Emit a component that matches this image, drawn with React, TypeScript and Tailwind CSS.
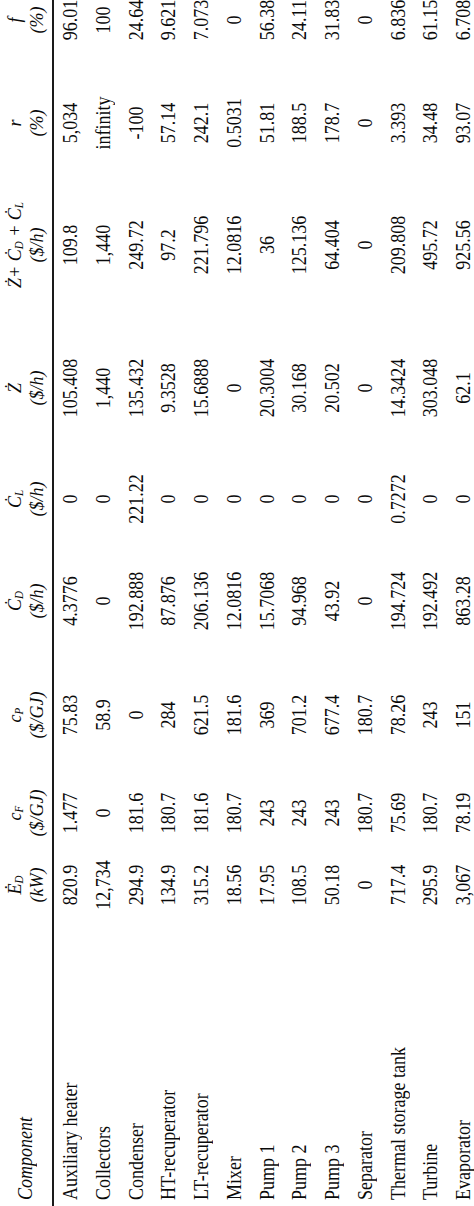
import React from 'react';

type Row = { name: string; values: string[] };

const rows: Row[] = [
    { name: 'Auxiliary heater', values: ['820.9', '1.477', '75.83', '4.3776', '0', '105.408', '109.8', '5,034', '96.01'] },
    { name: 'Collectors', values: ['12,734', '0', '58.9', '0', '0', '1,440', '1,440', 'infinity', '100'] },
    { name: 'Condenser', values: ['294.9', '181.6', '0', '192.888', '221.22', '135.432', '249.72', '-100', '24.64'] },
    { name: 'HT-recuperator', values: ['134.9', '180.7', '284', '87.876', '0', '9.3528', '97.2', '57.14', '9.621'] },
    { name: 'LT-recuperator', values: ['315.2', '181.6', '621.5', '206.136', '0', '15.6888', '221.796', '242.1', '7.073'] },
    { name: 'Mixer', values: ['18.56', '180.7', '181.6', '12.0816', '0', '0', '12.0816', '0.5031', '0'] },
    { name: 'Pump 1', values: ['17.95', '243', '369', '15.7068', '0', '20.3004', '36', '51.81', '56.38'] },
    { name: 'Pump 2', values: ['108.5', '243', '701.2', '94.968', '0', '30.168', '125.136', '188.5', '24.11'] },
    { name: 'Pump 3', values: ['50.18', '243', '677.4', '43.92', '0', '20.502', '64.404', '178.7', '31.83'] },
    { name: 'Separator', values: ['0', '180.7', '180.7', '0', '0', '0', '0', '0', '0'] },
    { name: 'Thermal storage tank', values: ['717.4', '75.69', '78.26', '194.724', '0.7272', '14.3424', '209.808', '3.393', '6.836'] },
    { name: 'Turbine', values: ['295.9', '180.7', '243', '192.492', '0', '303.048', '495.72', '34.48', '61.15'] },
    { name: 'Evaporator', values: ['3,067', '78.19', '151', '863.28', '0', '62.1', '925.56', '93.07', '6.708'] },
];

// widths of the value columns, in the table's own (unrotated) frame
const colWidths = ['w-[82px]', 'w-[62px]', 'w-[134px]', 'w-[94px]', 'w-[110px]', 'w-[112px]', 'w-[174px]', 'w-[70px]', 'w-[136px]'];

function Sub({ children }: { children: React.ReactNode }) {
    return <sub className="bottom-[-2px] text-[11px] not-italic"><i>{children}</i></sub>;
}

const headers: { top: React.ReactNode; unit: string }[] = [
    { top: <>Ė<Sub>D</Sub></>, unit: '(kW)' },
    { top: <>c<Sub>F</Sub></>, unit: '($/GJ)' },
    { top: <>c<Sub>P</Sub></>, unit: '($/GJ)' },
    { top: <>Ċ<Sub>D</Sub></>, unit: '($/h)' },
    { top: <>Ċ<Sub>L</Sub></>, unit: '($/h)' },
    { top: <>Ż</>, unit: '($/h)' },
    { top: <>Ż+ Ċ<Sub>D</Sub> + Ċ<Sub>L</Sub></>, unit: '($/h)' },
    { top: <>r</>, unit: '(%)' },
    { top: <>f</>, unit: '(%)' },
];

export default function App() {
    return (
        <div className="relative h-[1206px] w-[474px] overflow-hidden bg-white text-[#0a0a0a]">
            {/* the table is printed sideways, so lay it out flat and turn it */}
            <div
                className="absolute left-0 top-0 flex h-[474px] w-[1206px] origin-top-left translate-y-[1206px] -rotate-90 flex-col text-[18px]"
                style={{ fontFamily: '"Liberation Serif", "Times New Roman", serif' }}
            >
                <div className="flex h-[54px] shrink-0 items-center border-b-2 border-[#1a1a1a] pb-[2px]">
                    <div className="w-[280px] shrink-0 scale-y-[1.15] pl-[6px] italic">Component</div>
                    {headers.map((h, i) => (
                        <div key={i} className={`${colWidths[i]} flex shrink-0 scale-y-[1.1] flex-col items-center whitespace-nowrap italic leading-[20px]`}>
                            <span>{h.top}</span>
                            <span>{h.unit}</span>
                        </div>
                    ))}
                </div>
                {rows.map((row) => (
                    <div key={row.name} className="flex h-[32.75px] shrink-0 scale-y-[1.15] items-center">
                        <div className="w-[280px] shrink-0 whitespace-nowrap pl-[6px]">{row.name}</div>
                        {row.values.map((v, i) => (
                            <div key={i} className={`${colWidths[i]} shrink-0 whitespace-nowrap text-center`}>
                                {v}
                            </div>
                        ))}
                    </div>
                ))}
            </div>
        </div>
    );
}
